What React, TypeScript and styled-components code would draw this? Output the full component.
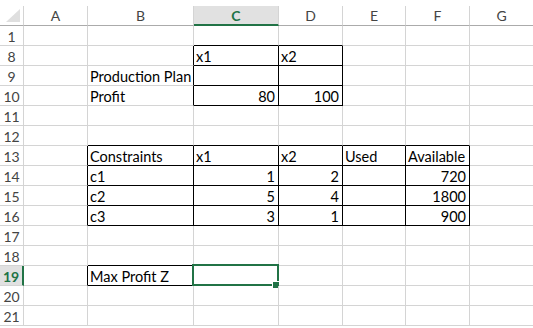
import React from "react";
import styled, { createGlobalStyle } from "styled-components";

const GlobalStyle = createGlobalStyle`
  html, body {
    margin: 0;
    padding: 0;
    background: #ffffff;
  }
  body {
    font-family: Lato, "Liberation Sans", sans-serif;
  }
`;

const GREEN = "#217346";
const GRID = "#d4d4d4";

const columns = ["A", "B", "C", "D", "E", "F", "G"];
const widths = [64, 106, 85, 64, 63, 64, 64];
const rows = [1, 8, 9, 10, 11, 12, 13, 14, 15, 16, 17, 18, 19, 20, 21];

const selCol = 2; // C
const selRow = 19;

interface Cell {
  v: string;
  right?: boolean;
}

const data: Record<string, Cell> = {
  C8: { v: "x1" },
  D8: { v: "x2" },
  B9: { v: "Production Plan" },
  B10: { v: "Profit" },
  C10: { v: "80", right: true },
  D10: { v: "100", right: true },
  B13: { v: "Constraints" },
  C13: { v: "x1" },
  D13: { v: "x2" },
  E13: { v: "Used" },
  F13: { v: "Available" },
  B14: { v: "c1" },
  C14: { v: "1", right: true },
  D14: { v: "2", right: true },
  F14: { v: "720", right: true },
  B15: { v: "c2" },
  C15: { v: "5", right: true },
  D15: { v: "4", right: true },
  F15: { v: "1800", right: true },
  B16: { v: "c3" },
  C16: { v: "3", right: true },
  D16: { v: "1", right: true },
  F16: { v: "900", right: true },
  B19: { v: "Max Profit Z" },
};

// bordered ranges: [colFrom, colTo, rowFrom, rowTo]
const boxes = [
  [2, 3, 8, 10],
  [1, 5, 13, 16],
  [1, 1, 19, 19],
];

const inBox = (c: number, r: number | undefined) =>
  r !== undefined &&
  boxes.some(([c1, c2, r1, r2]) => c >= c1 && c <= c2 && r >= r1 && r <= r2);

function App() {
  return (
    <>
      <GlobalStyle />
      <Sheet>
        <Grid>
          <Corner>
            <svg width="14" height="13" viewBox="0 0 14 13">
              <polygon points="14,0 14,13 0,13" fill="#dfdfdf" />
            </svg>
          </Corner>
          {columns.map((c, i) => (
            <ColHead key={c} $active={i === selCol}>
              {c}
            </ColHead>
          ))}

          {rows.map((r, ri) => (
            <React.Fragment key={r}>
              <RowHead $active={r === selRow}>{r}</RowHead>
              {columns.map((c, ci) => {
                const cell = data[c + r];
                const next = rows[ri + 1];
                return (
                  <Cell
                    key={c + r}
                    $right={!!cell?.right}
                    $br={inBox(ci, r) || inBox(ci + 1, r)}
                    $bb={inBox(ci, r) || inBox(ci, next)}
                  >
                    {cell?.v}
                    {ci === selCol && r === selRow && (
                      <Selection>
                        <Handle />
                      </Selection>
                    )}
                  </Cell>
                );
              })}
            </React.Fragment>
          ))}
        </Grid>
      </Sheet>
    </>
  );
}

const Sheet = styled.div`
  width: 533px;
  height: 328px;
  overflow: hidden;
  padding-top: 6px;
  box-sizing: border-box;
  background: #ffffff;
`;

const Grid = styled.div`
  display: grid;
  grid-template-columns: 24px ${widths.map((w) => `${w}px`).join(" ")};
  grid-auto-rows: 20px;
`;

const Corner = styled.div`
  box-sizing: border-box;
  border-right: 1px solid ${GRID};
  border-bottom: 1px solid #ababab;
  display: flex;
  align-items: flex-end;
  justify-content: flex-end;
  padding: 0 3px 3px 0;
`;

const ColHead = styled.div<{ $active: boolean }>`
  box-sizing: border-box;
  border-right: 1px solid ${GRID};
  border-bottom: ${(p) => (p.$active ? `2px solid ${GREEN}` : "1px solid #ababab")};
  background: ${(p) => (p.$active ? "#e1e1e1" : "#ffffff")};
  color: ${(p) => (p.$active ? GREEN : "#444444")};
  font-weight: ${(p) => (p.$active ? 700 : 400)};
  font-size: 14px;
  line-height: 19px;
  text-align: center;
`;

const RowHead = styled.div<{ $active: boolean }>`
  box-sizing: border-box;
  border-right: ${(p) => (p.$active ? `2px solid ${GREEN}` : `1px solid ${GRID}`)};
  border-bottom: 1px solid ${GRID};
  background: ${(p) => (p.$active ? "#e1e1e1" : "#ffffff")};
  color: ${(p) => (p.$active ? GREEN : "#444444")};
  font-weight: ${(p) => (p.$active ? 700 : 400)};
  font-size: 14px;
  line-height: 19px;
  padding-top: 1px;
  text-align: center;
`;

const Cell = styled.div<{ $right: boolean; $br: boolean; $bb: boolean }>`
  position: relative;
  box-sizing: border-box;
  border-right: 1px solid ${(p) => (p.$br ? "#000000" : GRID)};
  border-bottom: 1px solid ${(p) => (p.$bb ? "#000000" : GRID)};
  padding: 2px 3px 0 2px;
  font-size: 14.5px;
  line-height: 17px;
  color: #000000;
  white-space: nowrap;
  text-align: ${(p) => (p.$right ? "right" : "left")};
`;

const Selection = styled.div`
  position: absolute;
  left: -2px;
  top: -2px;
  right: -1px;
  bottom: -1px;
  border: 2px solid ${GREEN};
  box-sizing: border-box;
`;

const Handle = styled.div`
  position: absolute;
  right: -2px;
  bottom: -4px;
  width: 6px;
  height: 6px;
  background: ${GREEN};
  border-left: 1px solid #ffffff;
  border-top: 1px solid #ffffff;
`;

export default App;
